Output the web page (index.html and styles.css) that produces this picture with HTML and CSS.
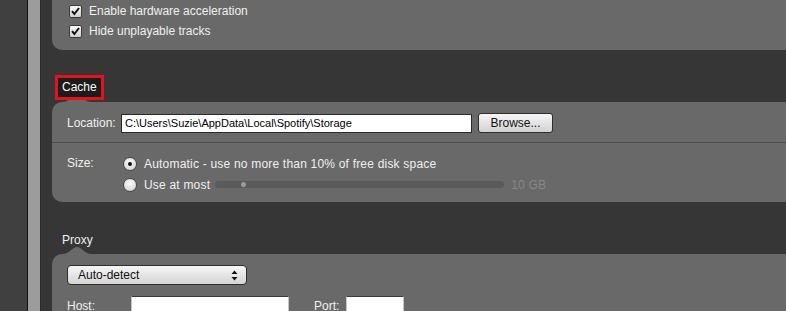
FILE: index.html
```html
<!DOCTYPE html>
<html lang="en">
<head>
  <meta charset="UTF-8" />
  <title>Preferences</title>
  <link rel="stylesheet" href="styles.css">
</head>
<body>
  <div class="sidebar"></div>
  <div class="scrollbar"></div>

  <div class="content">
    <div class="panel panel-top">
      <label class="check-row">
        <svg class="checkbox" width="13" height="13" viewBox="0 0 13 13">
          <defs>
            <linearGradient id="cb" x1="0" y1="0" x2="0" y2="1">
              <stop offset="0" stop-color="#fafafa"/>
              <stop offset="1" stop-color="#cfcfcf"/>
            </linearGradient>
          </defs>
          <rect x="0.5" y="0.5" width="12" height="12" rx="1.5" fill="url(#cb)" stroke="#3a3a3a"/>
          <path d="M3 6.2 L5.4 9 L10 3" fill="none" stroke="#111" stroke-width="2"/>
        </svg>
        Enable hardware acceleration
      </label>
      <label class="check-row">
        <svg class="checkbox" width="13" height="13" viewBox="0 0 13 13">
          <rect x="0.5" y="0.5" width="12" height="12" rx="1.5" fill="url(#cb)" stroke="#3a3a3a"/>
          <path d="M3 6.2 L5.4 9 L10 3" fill="none" stroke="#111" stroke-width="2"/>
        </svg>
        Hide unplayable tracks
      </label>
    </div>

    <div class="section-title"><span class="marked">Cache</span></div>
    <div class="panel panel-tab">
      <svg class="tab-bump" width="30" height="7" viewBox="0 0 30 7"><path d="M0 7 C8 7 10 0 15 0 C20 0 22 7 30 7 Z" fill="#696969"/></svg>
      <div class="form-row location-row">
        <span class="field-label">Location:</span>
        <div class="text-input path-input">C:\Users\Suzie\AppData\Local\Spotify\Storage</div>
        <button class="btn">Browse...</button>
      </div>
      <div class="divider"></div>
      <div class="size-block">
        <span class="field-label">Size:</span>
        <div class="radio-list">
          <div class="radio-row">
            <span class="radio checked"></span>
            Automatic - use no more than 10% of free disk space
          </div>
          <div class="radio-row">
            <span class="radio"></span>
            Use at most
            <div class="slider"><span class="slider-thumb"></span></div>
            <span class="muted">10 GB</span>
          </div>
        </div>
      </div>
    </div>

    <div class="section-title proxy-title">Proxy</div>
    <div class="panel panel-tab panel-bottom">
      <svg class="tab-bump" width="30" height="7" viewBox="0 0 30 7"><path d="M0 7 C8 7 10 0 15 0 C20 0 22 7 30 7 Z" fill="#696969"/></svg>
      <div class="select">
        Auto-detect
        <svg class="select-arrows" width="7" height="11" viewBox="0 0 7 11"><path d="M3.5 0.5 L6.5 4 L0.5 4 Z M0.5 7 L6.5 7 L3.5 10.5 Z" fill="#111"/></svg>
      </div>
      <div class="form-row host-row">
        <span class="field-label host-label">Host:</span>
        <div class="text-input host-input"></div>
        <span class="field-label port-label">Port:</span>
        <div class="text-input port-input"></div>
      </div>
    </div>
  </div>
</body>
</html>
```

FILE: styles.css
```css
body {
  margin: 0;
  height: 311px;
  overflow: hidden;
  display: flex;
  background: #363636;
  font-family: "Liberation Sans", Arial, sans-serif;
  font-size: 12px;
  color: #f0f0f0;
}
.sidebar {
  width: 27px;
  background: #404040;
  border-right: 1px solid #121212;
}
.scrollbar {
  width: 12px;
  background: #9c9c9c;
  border-right: 1px solid #2a2a2a;
}
.content {
  flex: 1;
  padding-left: 11px;
}
.panel {
  background: #696969;
  position: relative;
}
.panel-top {
  border-radius: 0 0 0 10px;
  padding: 1px 0 9px 17px;
}
.panel-tab {
  border-radius: 10px 0 0 10px;
}
.panel-bottom {
  border-radius: 10px 0 0 0;
  height: 80px;
  padding: 11px 0 0 15px;
}
.tab-bump {
  position: absolute;
  left: 10px;
  top: -7px;
}
.check-row {
  display: flex;
  align-items: center;
  gap: 7px;
  height: 20px;
}
.section-title {
  padding-left: 10px;
  line-height: 18px;
}
.marked {
  display: inline-block;
  position: relative;
  z-index: 1;
  margin: 25px 0 2px -7px;
  padding: 0 4px;
  line-height: 19px;
  border: 3px solid #e3121c;
  background: #1c1c1c;
  color: #fafafa;
}
.proxy-title {
  padding-top: 29px;
  padding-bottom: 5px;
}
.form-row {
  display: flex;
  align-items: center;
}
.location-row {
  padding: 11px 0 9px 15px;
  height: 20px;
}
.field-label {
  width: 54px;
  flex-shrink: 0;
}
.text-input {
  background: #fff;
  border: 1px solid #2a2a2a;
  box-sizing: border-box;
  color: #000;
  font-size: 11px;
}
.path-input {
  width: 351px;
  height: 19px;
  line-height: 17px;
  padding-left: 3px;
}
.btn {
  margin-left: 6px;
  width: 75px;
  height: 20px;
  border: 1px solid #2e2e2e;
  border-radius: 3px;
  background: linear-gradient(#f6f6f6, #d2d2d2);
  font-family: inherit;
  font-size: 12px;
  color: #111;
  padding: 0;
}
.divider {
  height: 1px;
  background: #4e4e4e;
}
.size-block {
  display: flex;
  padding: 10px 0 7px 15px;
}
.size-block .field-label {
  line-height: 21px;
}
.radio-row {
  display: flex;
  align-items: center;
  height: 21px;
  gap: 7px;
  letter-spacing: 0.2px;
}
.radio {
  width: 14px;
  height: 14px;
  margin-left: 2px;
  border-radius: 50%;
  box-sizing: border-box;
  border: 1px solid #4a4a4a;
  background: radial-gradient(circle at 50% 35%, #fbfbfb, #cdcdcd);
  display: flex;
  align-items: center;
  justify-content: center;
}
.radio.checked::after {
  content: "";
  width: 4px;
  height: 4px;
  border-radius: 50%;
  background: #111;
}
.slider {
  width: 289px;
  height: 7px;
  border-radius: 4px;
  background: #5a5a5a;
  position: relative;
  margin-left: -2px;
}
.slider-thumb {
  position: absolute;
  left: 26px;
  top: 1px;
  width: 5px;
  height: 5px;
  border-radius: 50%;
  background: #9b9b9b;
}
.muted {
  color: #878787;
}
.select {
  width: 180px;
  height: 20px;
  box-sizing: border-box;
  border: 1px solid #2e2e2e;
  border-radius: 4px;
  background: linear-gradient(#f6f6f6, #d4d4d4);
  color: #111;
  display: flex;
  align-items: center;
  justify-content: space-between;
  padding: 0 8px 0 10px;
}
.host-row {
  margin-top: 11px;
}
.host-label {
  width: 64px;
}
.host-input {
  width: 158px;
  height: 20px;
  border-color: #c6c6c6;
  border-top-color: #3a3a3a;
}
.port-label {
  width: auto;
  margin-left: 25px;
  margin-right: 7px;
}
.port-input {
  width: 58px;
  height: 20px;
  border-color: #c6c6c6;
  border-top-color: #3a3a3a;
}
```
